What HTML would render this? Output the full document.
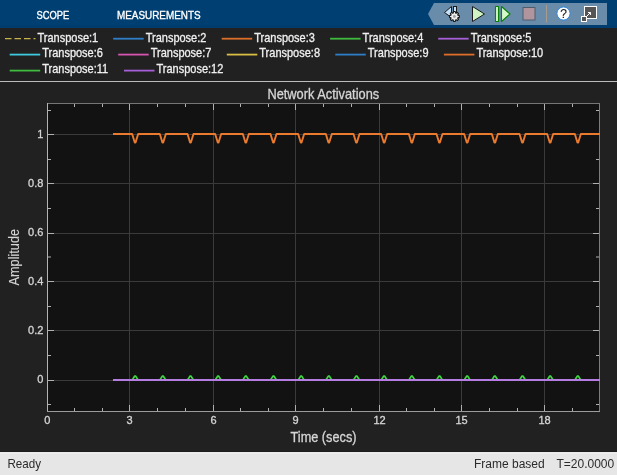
<!DOCTYPE html>
<html><head><meta charset="utf-8"><title>Scope</title>
<style>html,body{margin:0;padding:0;background:#212121;overflow:hidden}svg{display:block;will-change:transform}text{font-family:"Liberation Sans", sans-serif}</style>
</head><body>
<svg width="617" height="475" viewBox="0 0 617 475" shape-rendering="auto">
<rect x="0" y="0" width="617" height="28" fill="#003f72"/>
<rect x="0" y="25" width="617" height="3" fill="#003c6e"/>
<text transform="translate(36.6 18.8) scale(0.85 1)" font-size="11" fill="#ffffff" stroke="#ffffff" stroke-width="0.35">SCOPE</text>
<text transform="translate(117.0 18.8) scale(0.9 1)" font-size="11" fill="#ffffff" stroke="#ffffff" stroke-width="0.35">MEASUREMENTS</text>
<polygon points="434,3 607,3 607,25 434,25 428,14" fill="#6a8cab"/>
<polygon points="444.5,12.5 451.5,6.5 451.5,17.5" fill="#c6e2fb" stroke="#1a1a1a" stroke-width="1"/>
<rect x="453.5" y="6.5" width="3" height="8" fill="#c6e2fb" stroke="#1a1a1a" stroke-width="1"/>
<polygon points="453.20,13.00 453.55,11.57 455.25,11.57 455.60,13.00 456.03,13.18 457.29,12.42 458.48,13.61 457.72,14.87 457.90,15.30 459.33,15.65 459.33,17.35 457.90,17.70 457.72,18.13 458.48,19.39 457.29,20.58 456.03,19.82 455.60,20.00 455.25,21.43 453.55,21.43 453.20,20.00 452.77,19.82 451.51,20.58 450.32,19.39 451.08,18.13 450.90,17.70 449.47,17.35 449.47,15.65 450.90,15.30 451.08,14.87 450.32,13.61 451.51,12.42 452.77,13.18" fill="#ececec" stroke="#161616" stroke-width="1.1" stroke-linejoin="round"/>
<circle cx="454.4" cy="16.5" r="1.4" fill="#a0a0a0"/>
<polygon points="472.5,6.5 484.5,14 472.5,21.5" fill="#cff5c4" stroke="#1a1a1a" stroke-width="1" stroke-linejoin="round"/>
<rect x="495.5" y="6.5" width="3" height="15" rx="0.3" fill="#d4f8c8" stroke="#0b800b" stroke-width="1.1"/>
<polygon points="501.5,6.5 510,14 501.5,21.5" fill="#d4f8c8" stroke="#0b800b" stroke-width="1.1" stroke-linejoin="round"/>
<rect x="523" y="7.5" width="12" height="12.5" fill="#b0959f" stroke="#4e5c6a" stroke-width="1"/>
<rect x="546" y="5" width="1" height="17.5" fill="#a89c8e"/>
<circle cx="563.5" cy="13.5" r="6.6" fill="#ffffff" stroke="#2a86e0" stroke-width="1"/>
<text transform="translate(563.6 17.8)" font-size="12" fill="#1e1e1e" text-anchor="middle" stroke="#1e1e1e" stroke-width="0.15">?</text>
<rect x="584.5" y="6.5" width="12" height="12" fill="#555555" stroke="#ffffff" stroke-width="1"/>
<rect x="581.5" y="16.5" width="5" height="5" fill="#555555" stroke="#ffffff" stroke-width="1"/>
<path d="M587,16 L590.5,12.5 M588,12.5 L590.5,12.5 L590.5,15" stroke="#ffffff" stroke-width="1" fill="none"/>
<rect x="0" y="28" width="617" height="424" fill="#212121"/>
<line x1="5.0" y1="38.7" x2="35.5" y2="38.7" stroke="#c9b44a" stroke-width="1.3" stroke-dasharray="6.5,3"/>
<text transform="translate(37.5 41.5) scale(0.917 1)" font-size="12" fill="#f0f0f0" stroke="#f0f0f0" stroke-width="0.3">Transpose:1</text>
<line x1="113.2" y1="38.7" x2="143.7" y2="38.7" stroke="#2f7fc8" stroke-width="1.8"/>
<text transform="translate(145.7 41.5) scale(0.917 1)" font-size="12" fill="#f0f0f0" stroke="#f0f0f0" stroke-width="0.3">Transpose:2</text>
<line x1="221.7" y1="38.7" x2="252.2" y2="38.7" stroke="#dd6f2a" stroke-width="1.8"/>
<text transform="translate(254.2 41.5) scale(0.917 1)" font-size="12" fill="#f0f0f0" stroke="#f0f0f0" stroke-width="0.3">Transpose:3</text>
<line x1="330.1" y1="38.7" x2="360.6" y2="38.7" stroke="#3fbb3f" stroke-width="1.8"/>
<text transform="translate(362.6 41.5) scale(0.917 1)" font-size="12" fill="#f0f0f0" stroke="#f0f0f0" stroke-width="0.3">Transpose:4</text>
<line x1="438.2" y1="38.7" x2="468.7" y2="38.7" stroke="#a65fd6" stroke-width="1.8"/>
<text transform="translate(470.7 41.5) scale(0.917 1)" font-size="12" fill="#f0f0f0" stroke="#f0f0f0" stroke-width="0.3">Transpose:5</text>
<line x1="9.7" y1="54.6" x2="40.2" y2="54.6" stroke="#3fc9dc" stroke-width="1.8"/>
<text transform="translate(42.2 57.4) scale(0.917 1)" font-size="12" fill="#f0f0f0" stroke="#f0f0f0" stroke-width="0.3">Transpose:6</text>
<line x1="118.2" y1="54.6" x2="148.7" y2="54.6" stroke="#d555b0" stroke-width="1.8"/>
<text transform="translate(150.7 57.4) scale(0.917 1)" font-size="12" fill="#f0f0f0" stroke="#f0f0f0" stroke-width="0.3">Transpose:7</text>
<line x1="226.8" y1="54.6" x2="257.3" y2="54.6" stroke="#d9bd45" stroke-width="1.8"/>
<text transform="translate(259.3 57.4) scale(0.917 1)" font-size="12" fill="#f0f0f0" stroke="#f0f0f0" stroke-width="0.3">Transpose:8</text>
<line x1="335.3" y1="54.6" x2="365.8" y2="54.6" stroke="#2f7fc8" stroke-width="1.8"/>
<text transform="translate(367.8 57.4) scale(0.917 1)" font-size="12" fill="#f0f0f0" stroke="#f0f0f0" stroke-width="0.3">Transpose:9</text>
<line x1="443.9" y1="54.6" x2="474.4" y2="54.6" stroke="#dd6f2a" stroke-width="1.8"/>
<text transform="translate(476.4 57.4) scale(0.917 1)" font-size="12" fill="#f0f0f0" stroke="#f0f0f0" stroke-width="0.3">Transpose:10</text>
<line x1="9.7" y1="70.6" x2="40.2" y2="70.6" stroke="#3fbb3f" stroke-width="1.8"/>
<text transform="translate(42.2 73.39999999999999) scale(0.917 1)" font-size="12" fill="#f0f0f0" stroke="#f0f0f0" stroke-width="0.3">Transpose:11</text>
<line x1="124.0" y1="70.6" x2="154.5" y2="70.6" stroke="#a65fd6" stroke-width="1.8"/>
<text transform="translate(156.5 73.39999999999999) scale(0.917 1)" font-size="12" fill="#f0f0f0" stroke="#f0f0f0" stroke-width="0.3">Transpose:12</text>
<rect x="0" y="81" width="617" height="1" fill="#bdbdbd"/>
<rect x="47" y="103" width="552" height="308" fill="#121212"/>
<rect x="129" y="104" width="1" height="307" fill="#3a3a3a"/>
<rect x="213" y="104" width="1" height="307" fill="#3a3a3a"/>
<rect x="295" y="104" width="1" height="307" fill="#3a3a3a"/>
<rect x="379" y="104" width="1" height="307" fill="#3a3a3a"/>
<rect x="461" y="104" width="1" height="307" fill="#3a3a3a"/>
<rect x="544" y="104" width="1" height="307" fill="#3a3a3a"/>
<rect x="48" y="134" width="551" height="1" fill="#3a3a3a"/>
<rect x="48" y="183" width="551" height="1" fill="#3a3a3a"/>
<rect x="48" y="233" width="551" height="1" fill="#3a3a3a"/>
<rect x="48" y="281" width="551" height="1" fill="#3a3a3a"/>
<rect x="48" y="330" width="551" height="1" fill="#3a3a3a"/>
<rect x="48" y="380" width="551" height="1" fill="#3a3a3a"/>
<rect x="74" y="408" width="1" height="3" fill="#b0b0b0"/>
<rect x="74" y="104" width="1" height="3" fill="#b0b0b0"/>
<rect x="102" y="408" width="1" height="3" fill="#b0b0b0"/>
<rect x="102" y="104" width="1" height="3" fill="#b0b0b0"/>
<rect x="129" y="405" width="1" height="6" fill="#b0b0b0"/>
<rect x="129" y="104" width="1" height="6" fill="#b0b0b0"/>
<rect x="157" y="408" width="1" height="3" fill="#b0b0b0"/>
<rect x="157" y="104" width="1" height="3" fill="#b0b0b0"/>
<rect x="185" y="408" width="1" height="3" fill="#b0b0b0"/>
<rect x="185" y="104" width="1" height="3" fill="#b0b0b0"/>
<rect x="213" y="405" width="1" height="6" fill="#b0b0b0"/>
<rect x="213" y="104" width="1" height="6" fill="#b0b0b0"/>
<rect x="240" y="408" width="1" height="3" fill="#b0b0b0"/>
<rect x="240" y="104" width="1" height="3" fill="#b0b0b0"/>
<rect x="268" y="408" width="1" height="3" fill="#b0b0b0"/>
<rect x="268" y="104" width="1" height="3" fill="#b0b0b0"/>
<rect x="295" y="405" width="1" height="6" fill="#b0b0b0"/>
<rect x="295" y="104" width="1" height="6" fill="#b0b0b0"/>
<rect x="323" y="408" width="1" height="3" fill="#b0b0b0"/>
<rect x="323" y="104" width="1" height="3" fill="#b0b0b0"/>
<rect x="351" y="408" width="1" height="3" fill="#b0b0b0"/>
<rect x="351" y="104" width="1" height="3" fill="#b0b0b0"/>
<rect x="379" y="405" width="1" height="6" fill="#b0b0b0"/>
<rect x="379" y="104" width="1" height="6" fill="#b0b0b0"/>
<rect x="406" y="408" width="1" height="3" fill="#b0b0b0"/>
<rect x="406" y="104" width="1" height="3" fill="#b0b0b0"/>
<rect x="434" y="408" width="1" height="3" fill="#b0b0b0"/>
<rect x="434" y="104" width="1" height="3" fill="#b0b0b0"/>
<rect x="461" y="405" width="1" height="6" fill="#b0b0b0"/>
<rect x="461" y="104" width="1" height="6" fill="#b0b0b0"/>
<rect x="489" y="408" width="1" height="3" fill="#b0b0b0"/>
<rect x="489" y="104" width="1" height="3" fill="#b0b0b0"/>
<rect x="517" y="408" width="1" height="3" fill="#b0b0b0"/>
<rect x="517" y="104" width="1" height="3" fill="#b0b0b0"/>
<rect x="544" y="405" width="1" height="6" fill="#b0b0b0"/>
<rect x="544" y="104" width="1" height="6" fill="#b0b0b0"/>
<rect x="572" y="408" width="1" height="3" fill="#b0b0b0"/>
<rect x="572" y="104" width="1" height="3" fill="#b0b0b0"/>
<rect x="48" y="134" width="6" height="1" fill="#b0b0b0"/>
<rect x="593" y="134" width="6" height="1" fill="#b0b0b0"/>
<rect x="48" y="183" width="6" height="1" fill="#b0b0b0"/>
<rect x="593" y="183" width="6" height="1" fill="#b0b0b0"/>
<rect x="48" y="233" width="6" height="1" fill="#b0b0b0"/>
<rect x="593" y="233" width="6" height="1" fill="#b0b0b0"/>
<rect x="48" y="281" width="6" height="1" fill="#b0b0b0"/>
<rect x="593" y="281" width="6" height="1" fill="#b0b0b0"/>
<rect x="48" y="330" width="6" height="1" fill="#b0b0b0"/>
<rect x="593" y="330" width="6" height="1" fill="#b0b0b0"/>
<rect x="48" y="380" width="6" height="1" fill="#b0b0b0"/>
<rect x="593" y="380" width="6" height="1" fill="#b0b0b0"/>
<rect x="48" y="110" width="3" height="1" fill="#b0b0b0"/>
<rect x="596" y="110" width="3" height="1" fill="#b0b0b0"/>
<rect x="48" y="159" width="3" height="1" fill="#b0b0b0"/>
<rect x="596" y="159" width="3" height="1" fill="#b0b0b0"/>
<rect x="48" y="208" width="3" height="1" fill="#b0b0b0"/>
<rect x="596" y="208" width="3" height="1" fill="#b0b0b0"/>
<rect x="48" y="256.5" width="3" height="1" fill="#b0b0b0"/>
<rect x="596" y="256.5" width="3" height="1" fill="#b0b0b0"/>
<rect x="48" y="306" width="3" height="1" fill="#b0b0b0"/>
<rect x="596" y="306" width="3" height="1" fill="#b0b0b0"/>
<rect x="48" y="355" width="3" height="1" fill="#b0b0b0"/>
<rect x="596" y="355" width="3" height="1" fill="#b0b0b0"/>
<rect x="48" y="404" width="3" height="1" fill="#b0b0b0"/>
<rect x="596" y="404" width="3" height="1" fill="#b0b0b0"/>
<rect x="47" y="103" width="553" height="1" fill="#767676"/>
<rect x="599" y="103" width="1" height="309" fill="#7c7c7c"/>
<rect x="47" y="103" width="1" height="309" fill="#b4b4b4"/>
<rect x="47" y="411" width="553" height="1" fill="#9c9c9c"/>
<path d="M113,134 L132.16,134 L134.76,142.6 L135.56,142.6 L138.16,134 L159.82,134 L162.42,142.6 L163.22,142.6 L165.82,134 L187.49,134 L190.09,142.6 L190.89,142.6 L193.49,134 L215.16,134 L217.76,142.6 L218.56,142.6 L221.16,134 L242.83,134 L245.43,142.6 L246.23,142.6 L248.83,134 L270.49,134 L273.09,142.6 L273.89,142.6 L276.49,134 L298.16,134 L300.76,142.6 L301.56,142.6 L304.16,134 L325.83,134 L328.43,142.6 L329.23,142.6 L331.83,134 L353.49,134 L356.09,142.6 L356.89,142.6 L359.49,134 L381.16,134 L383.76,142.6 L384.56,142.6 L387.16,134 L408.83,134 L411.43,142.6 L412.23,142.6 L414.83,134 L436.49,134 L439.09,142.6 L439.89,142.6 L442.49,134 L464.16,134 L466.76,142.6 L467.56,142.6 L470.16,134 L491.83,134 L494.43,142.6 L495.23,142.6 L497.83,134 L519.50,134 L522.10,142.6 L522.90,142.6 L525.50,134 L547.16,134 L549.76,142.6 L550.56,142.6 L553.16,134 L574.83,134 L577.43,142.6 L578.23,142.6 L580.83,134 L600,134" stroke="#e97a2e" stroke-width="1.9" fill="none" stroke-linejoin="round"/>
<path d="M132.16,380 L134.76,376 L135.56,376 L138.16,380" stroke="#40d840" stroke-width="1.6" fill="none" stroke-linejoin="round"/>
<path d="M159.82,380 L162.42,376 L163.22,376 L165.82,380" stroke="#40d840" stroke-width="1.6" fill="none" stroke-linejoin="round"/>
<path d="M187.49,380 L190.09,376 L190.89,376 L193.49,380" stroke="#40d840" stroke-width="1.6" fill="none" stroke-linejoin="round"/>
<path d="M215.16,380 L217.76,376 L218.56,376 L221.16,380" stroke="#40d840" stroke-width="1.6" fill="none" stroke-linejoin="round"/>
<path d="M242.83,380 L245.43,376 L246.23,376 L248.83,380" stroke="#40d840" stroke-width="1.6" fill="none" stroke-linejoin="round"/>
<path d="M270.49,380 L273.09,376 L273.89,376 L276.49,380" stroke="#40d840" stroke-width="1.6" fill="none" stroke-linejoin="round"/>
<path d="M298.16,380 L300.76,376 L301.56,376 L304.16,380" stroke="#40d840" stroke-width="1.6" fill="none" stroke-linejoin="round"/>
<path d="M325.83,380 L328.43,376 L329.23,376 L331.83,380" stroke="#40d840" stroke-width="1.6" fill="none" stroke-linejoin="round"/>
<path d="M353.49,380 L356.09,376 L356.89,376 L359.49,380" stroke="#40d840" stroke-width="1.6" fill="none" stroke-linejoin="round"/>
<path d="M381.16,380 L383.76,376 L384.56,376 L387.16,380" stroke="#40d840" stroke-width="1.6" fill="none" stroke-linejoin="round"/>
<path d="M408.83,380 L411.43,376 L412.23,376 L414.83,380" stroke="#40d840" stroke-width="1.6" fill="none" stroke-linejoin="round"/>
<path d="M436.49,380 L439.09,376 L439.89,376 L442.49,380" stroke="#40d840" stroke-width="1.6" fill="none" stroke-linejoin="round"/>
<path d="M464.16,380 L466.76,376 L467.56,376 L470.16,380" stroke="#40d840" stroke-width="1.6" fill="none" stroke-linejoin="round"/>
<path d="M491.83,380 L494.43,376 L495.23,376 L497.83,380" stroke="#40d840" stroke-width="1.6" fill="none" stroke-linejoin="round"/>
<path d="M519.50,380 L522.10,376 L522.90,376 L525.50,380" stroke="#40d840" stroke-width="1.6" fill="none" stroke-linejoin="round"/>
<path d="M547.16,380 L549.76,376 L550.56,376 L553.16,380" stroke="#40d840" stroke-width="1.6" fill="none" stroke-linejoin="round"/>
<path d="M574.83,380 L577.43,376 L578.23,376 L580.83,380" stroke="#40d840" stroke-width="1.6" fill="none" stroke-linejoin="round"/>
<rect x="113" y="379" width="487" height="2" fill="#b57de2"/>
<text transform="translate(43.4 137.8)" font-size="11" fill="#d6d6d6" text-anchor="end" stroke="#d6d6d6" stroke-width="0.3">1</text>
<text transform="translate(43.4 186.84)" font-size="11" fill="#d6d6d6" text-anchor="end" stroke="#d6d6d6" stroke-width="0.3">0.8</text>
<text transform="translate(43.4 235.88)" font-size="11" fill="#d6d6d6" text-anchor="end" stroke="#d6d6d6" stroke-width="0.3">0.6</text>
<text transform="translate(43.4 284.92)" font-size="11" fill="#d6d6d6" text-anchor="end" stroke="#d6d6d6" stroke-width="0.3">0.4</text>
<text transform="translate(43.4 333.96)" font-size="11" fill="#d6d6d6" text-anchor="end" stroke="#d6d6d6" stroke-width="0.3">0.2</text>
<text transform="translate(43.4 383.0)" font-size="11" fill="#d6d6d6" text-anchor="end" stroke="#d6d6d6" stroke-width="0.3">0</text>
<text transform="translate(47.3 424.0)" font-size="11" fill="#d6d6d6" text-anchor="middle" stroke="#d6d6d6" stroke-width="0.3">0</text>
<text transform="translate(129.5 424.0)" font-size="11" fill="#d6d6d6" text-anchor="middle" stroke="#d6d6d6" stroke-width="0.3">3</text>
<text transform="translate(213.5 424.0)" font-size="11" fill="#d6d6d6" text-anchor="middle" stroke="#d6d6d6" stroke-width="0.3">6</text>
<text transform="translate(295.5 424.0)" font-size="11" fill="#d6d6d6" text-anchor="middle" stroke="#d6d6d6" stroke-width="0.3">9</text>
<text transform="translate(379.5 424.0)" font-size="11" fill="#d6d6d6" text-anchor="middle" stroke="#d6d6d6" stroke-width="0.3">12</text>
<text transform="translate(461.5 424.0)" font-size="11" fill="#d6d6d6" text-anchor="middle" stroke="#d6d6d6" stroke-width="0.3">15</text>
<text transform="translate(544.5 424.0)" font-size="11" fill="#d6d6d6" text-anchor="middle" stroke="#d6d6d6" stroke-width="0.3">18</text>
<text transform="translate(323.3 98.6) scale(0.916 1)" font-size="14" fill="#d6d6d6" text-anchor="middle" stroke="#d6d6d6" stroke-width="0.3">Network Activations</text>
<text transform="translate(323.5 441.8) scale(0.91 1)" font-size="14" fill="#d6d6d6" text-anchor="middle" stroke="#d6d6d6" stroke-width="0.3">Time (secs)</text>
<text transform="translate(18.7 257.2) rotate(-90) scale(0.91 1)" font-size="14" fill="#d6d6d6" text-anchor="middle" stroke="#d6d6d6" stroke-width="0.1">Amplitude</text>
<rect x="0" y="451" width="617" height="1" fill="#1c1c1c"/>
<rect x="0" y="452" width="617" height="23" fill="#e6e6e6"/>
<rect x="0" y="452" width="617" height="2" fill="#ebebeb"/>
<text transform="translate(7.4 468) scale(0.97 1)" font-size="12" fill="#2a2a2a">Ready</text>
<text x="474" y="468" font-size="12" fill="#2a2a2a">Frame based</text>
<text transform="translate(556.5 468)" font-size="12" fill="#2a2a2a">T=20.0000</text>
</svg>
</body></html>
